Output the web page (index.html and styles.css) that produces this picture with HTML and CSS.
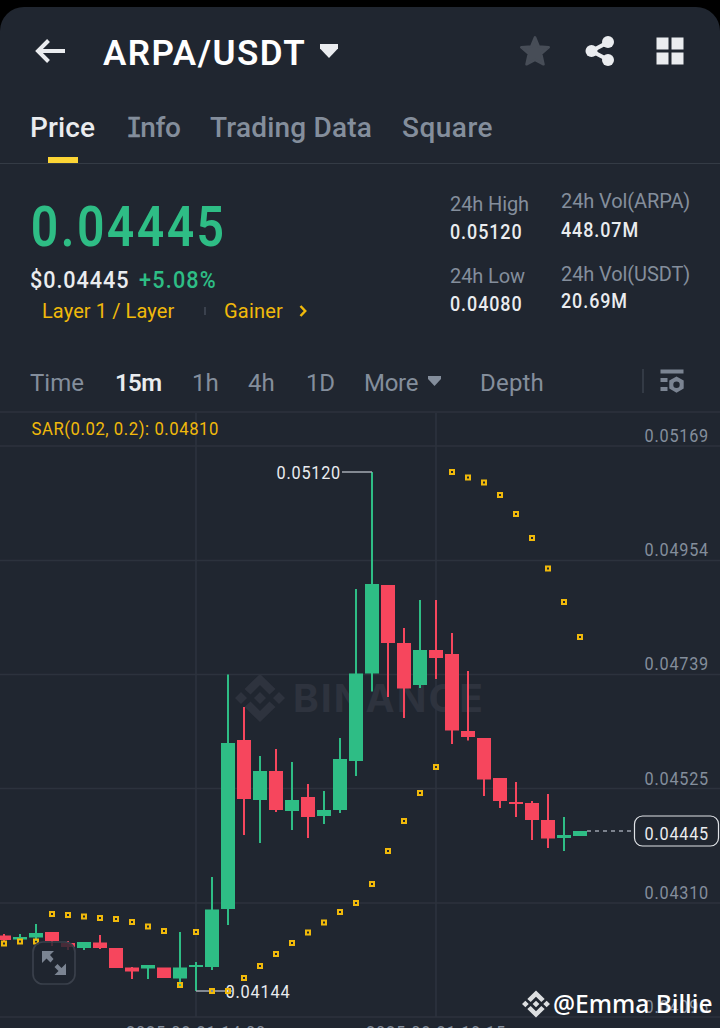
FILE: index.html
```html
<!DOCTYPE html>
<html lang="en">
<head>
<meta charset="utf-8">
<title>ARPA/USDT</title>
<link rel="stylesheet" href="styles.css">
</head>
<body>
<main class="app">
  <header class="topbar">
    <svg class="back" width="32" height="26" viewBox="34 38 32 26"><path d="M65 51H38M48.500 40.500 38 51l10.500 10.500" fill="none" stroke="#eaecef" stroke-width="4"/></svg>
    <h1 class="pair">ARPA/USDT</h1>
    <svg class="caret" width="18" height="14" viewBox="0 0 18 14"><path d="M0 0h18v4.500L9 14 0 4.500z" fill="#eaecef"/></svg>
    <div class="actions">
      <svg width="30" height="30" viewBox="0 0 30 30"><path d="M15 1.300l3.800 9.200 9.900.8-7.500 6.500 2.300 10.500L15 23.800l-8.500 4.500 2.300-10.500-7.500-6.500 9.900-.8z" fill="#474d57" stroke="#474d57" stroke-width="2.500" stroke-linejoin="round"/></svg>
      <svg width="30" height="30" viewBox="0 0 30 30"><path d="M23.500 6 6.500 15l17 9" fill="none" stroke="#eaecef" stroke-width="4"/><g fill="#eaecef"><circle cx="23" cy="6" r="6"/><circle cx="6.500" cy="15" r="6"/><circle cx="23" cy="24" r="6"/></g></svg>
      <svg width="28" height="28" viewBox="0 0 28 28"><path d="M.5.500h12v12H.5zM15.500.500h12v12h-12zM.5 15.500h12v12H.5zM15.500 15.500h12v12h-12z" fill="#eaecef"/></svg>
    </div>
  </header>
  <nav class="tabs">
    <a class="tab tab-price active">Price</a>
    <a class="tab tab-info"><span class="slab">I</span>nfo</a>
    <a class="tab tab-data">Trading Data</a>
    <a class="tab tab-square">Square</a>
  </nav>
  <section class="summary">
    <div class="quote">
      <div class="last">0.04445</div>
      <div class="fiat"><span class="usd">$0.04445</span><span class="change">+5.08%</span></div>
      <div class="tags"><span class="tag-layer">Layer 1 / Layer</span><i class="tick"></i><span class="tag-gainer">Gainer</span><svg width="8" height="12" viewBox="0 0 8 12"><path d="M1.500 1 6.200 6l-4.700 5" fill="none" stroke="#f0b90b" stroke-width="2.500"/></svg></div>
    </div>
    <dl class="stats stats-range"><dt>24h High</dt><dd>0.05120</dd><dt>24h Low</dt><dd>0.04080</dd></dl>
    <dl class="stats stats-volume"><dt>24h Vol(ARPA)</dt><dd>448.07M</dd><dt>24h Vol(USDT)</dt><dd>20.69M</dd></dl>
  </section>
  <nav class="frames">
    <span class="f-time">Time</span><span class="f-15 selected">15m</span><span class="f-1h">1h</span><span class="f-4h">4h</span><span class="f-1d">1D</span><span class="f-more">More</span>
    <svg class="f-caret" width="13" height="10" viewBox="0 0 13 10"><path d="M0 0h13v3L6.500 10 0 3z" fill="#848e9c"/></svg>
    <span class="f-depth">Depth</span><i class="split"></i>
    <svg class="f-settings" width="24" height="24" viewBox="0 0 24 24"><path d="M.5.500h23v4H.5zM.5 9h7v4h-7zM.5 18h7v4h-7z" fill="#7b8492"/><path fill-rule="evenodd" d="M16.500 7.500l7.200 4v8l-7.200 4.200-7.200-4.200v-8zM16.500 12.500a3.200 3.200 0 1 0 0 6.400 3.200 3.200 0 0 0 0-6.400z" fill="#7b8492"/></svg>
  </nav>
  <svg class="chart" width="720" height="617" viewBox="0 411 720 617">
    <defs>
      <marker id="sar" markerUnits="userSpaceOnUse" markerWidth="8" markerHeight="8" refX="4" refY="4"><path d="M2 2h4v4H2z" fill="none" stroke="#f0b90b" stroke-width="2"/></marker>
      <g id="bnb"><path d="M0-24 15.500-9 9.500-3.500 0-13-9.500-3.500-15.500-9zM0 24l15.500-15-6-5.500L0 13-9.500 3.500-15.500 9zM0-6 6 0 0 6-6 0zM19-6l6 6-6 6-6-6zM-19-6l6 6-6 6-6-6z"/></g>
    </defs>
    <path class="grid" d="M0 412H720M0 446H720M0 560.500H720M0 674.500H720M0 788.500H720M0 903H720M0 1017H720M196 413V1017M436 413V1017"/>
    <g fill="#2e333e"><use href="#bnb" x="260" y="698"/><text class="brand" x="293" y="712" textLength="192" lengthAdjust="spacingAndGlyphs">BINANCE</text></g>
    <g class="axis">
      <text x="644.500" y="442" textLength="64.500" lengthAdjust="spacingAndGlyphs">0.05169</text>
      <text x="644.500" y="556" textLength="64.500" lengthAdjust="spacingAndGlyphs">0.04954</text>
      <text x="644.500" y="670" textLength="64.500" lengthAdjust="spacingAndGlyphs">0.04739</text>
      <text x="644.500" y="785" textLength="64.500" lengthAdjust="spacingAndGlyphs">0.04525</text>
      <text x="644.500" y="899" textLength="64.500" lengthAdjust="spacingAndGlyphs">0.04310</text>
      <text x="644.500" y="1013" textLength="64.500" lengthAdjust="spacingAndGlyphs">0.04095</text>
      <text x="126" y="1039" textLength="140" lengthAdjust="spacingAndGlyphs">2025-08-31 14:00</text>
      <text x="366" y="1039" textLength="140" lengthAdjust="spacingAndGlyphs">2025-08-31 19:15</text>
    </g>
    <text class="sar-label" x="31.500" y="435" textLength="187.500" lengthAdjust="spacingAndGlyphs">SAR(0.02, 0.2): 0.04810</text>
    <path class="wick up" d="M20 934V939M36 924V941M84 942V950M148 965V979M180 932V988M196 962V991M212 877V970M228 674.500V925M260 756V843M292 762V830M324 791V824M340 738V813M356 589V776M372 472V691.500M420 600V688M564 817V851"/>
    <path class="wick down" d="M4 934V942M52 932V946M68 941V950M100 935V949M132 967V979M244 707V835M276 749V812M308 784V838M388 585V697M404 628V718M436 600V679M452 633V744M468 671V740.500M484 738V796M500 778V808M516 782V817M532 801V840M548 794V848"/>
    <path class="body up" d="M20 937V939.500M36 933V937.500M84 942V948M148 965V968.500M180 967.500V978.500M196 965V967M212 909.500V967M228 743V909M260 771V800M292 800V811M324 810V816M340 759V810M356 673.500V761M372 584V673.500M420 650V685M564 835V838M580 831V836"/>
    <path class="body down" d="M4 935.500V940M52 932V941M68 943V947M100 942.500V948M116 948V968M132 967.500V971.500M164 967.500V978M244 740V799M276 771V810M308 797V817M388 585V643M404 643V688.500M436 650V658M452 654V730.500M468 731V737M484 738V779.500M500 778V801M516 802V804M532 803V820M548 820V838.500"/>
    <path d="M342 472H372M196 991H232" stroke="#a4aab3" stroke-width="1.500"/>
    <g class="extreme"><text x="276.500" y="479" textLength="64.500" lengthAdjust="spacingAndGlyphs">0.05120</text><text x="225.500" y="998" textLength="65" lengthAdjust="spacingAndGlyphs">0.04144</text></g>
    <polyline class="sar" points="4,943.5 20,941.5 36,941.5 52,914 68,915 84,916.5 100,918 116,919 132,922 148,926.5 164,931 180,985 196,932 212,991 228,991 244,978 260,966 276,954 292,943 308,932.5 324,922.5 340,912 356,903 372,884 388,851 404,821 420,793 436,767 452,472 468,477.5 484,482.5 500,495 516,514 532,538 548,568.5 564,602 580,637"/>
    <path d="M587 831H632" stroke="#9aa1ac" stroke-width="1.500" stroke-dasharray="4"/>
    <rect x="634.500" y="816" width="84" height="30" rx="8" fill="#202630" stroke="#dfe2e6" stroke-width="1.200"/>
    <text class="current" x="644.500" y="840" textLength="64.500" lengthAdjust="spacingAndGlyphs">0.04445</text>
    <rect x="33" y="942" width="42" height="42" rx="10" fill="#202630" fill-opacity=".82" stroke="#3a404b" stroke-width="1.700"/>
    <path d="M42 951h12l-4 4 3.500 4-3 3.500-4-4-4.500 4.500zM66 975H54.500l4-4-4-4 3-3 4 4 4.500-4.500z" fill="#7b8492"/>
    <use href="#bnb" transform="translate(536 1004) scale(.56)" fill="#dcdee0"/>
    <text class="author" x="553" y="1012.500" textLength="159.500" lengthAdjust="spacingAndGlyphs">@Emma Billie</text>
  </svg>
</main>
</body>
</html>
```
FILE: styles.css
```css
* { box-sizing: border-box; }
body { margin: 0; background: #000; padding-top: 7px; height: 1028px; overflow: hidden; font-family: Roboto, "Noto Sans", sans-serif; }
.app { height: 1021px; background: #202630; border-radius: 24px 24px 0 0; overflow: hidden; display: flex; flex-direction: column; color: #eaecef; white-space: nowrap; }
svg { display: block; flex: none; }
.topbar { height: 88px; display: flex; align-items: center; padding: 0 36px 0 34px; }
.pair { margin: 6px 0 0 37px; width: 217px; font-size: 35px; line-height: 40px; font-weight: 600; letter-spacing: 1.5px; color: #fff; }
.caret { margin-top: 0; }
.actions { margin-left: auto; display: flex; align-items: center; gap: 35px; }
.actions svg:last-child { margin-left: 6px; }
.tabs { height: 69px; display: flex; border-bottom: 1px solid #343b45; padding-left: 30px; font-size: 28px; line-height: 66px; font-weight: 500; color: #848e9c; }
.tab { position: relative; height: 68px; flex: none; }
.tab-price { width: 96px; letter-spacing: .1px; }
.tab-info { width: 84px; letter-spacing: -.4px; }
.tab-data { width: 192px; letter-spacing: .2px; }
.tab-square { letter-spacing: .5px; }
.slab { font-family: "DejaVu Sans Mono", monospace; font-size: 27px; letter-spacing: -2px; -webkit-text-stroke: .6px currentColor; }
.active { color: #eaecef; }
.active::after { content: ""; position: absolute; left: 18px; bottom: 0; width: 30px; height: 6px; background: #fcd535; }
.summary { height: 190px; display: flex; padding-left: 30px; }
.quote { width: 420px; padding-top: 31px; }
.last { font-size: 56px; line-height: 64px; font-weight: 600; letter-spacing: 2.8px; color: #2ebd85; transform: scaleX(.86); transform-origin: 0 50%; padding-left: 1px; }
.fiat { display: flex; font-size: 23.5px; line-height: 32px; margin-top: 5px; font-weight: 500; }
.usd { width: 109px; }
.usd, .change { letter-spacing: 1px; transform: scaleX(.92); transform-origin: 0 50%; }
.change { color: #2ebd85; letter-spacing: 1.3px; }
.tags { display: flex; align-items: center; line-height: 30px; padding-left: 12px; font-size: 20px; color: #f0b90b; }
.tag-layer { width: 162px; letter-spacing: .1px; }
.tick { width: 2px; height: 8px; background: #3a414d; margin-right: 18px; }
.tag-gainer { width: 75px; letter-spacing: .2px; }
.stats { margin: 0; font-size: 20px; }
.stats-range { width: 111px; padding-top: 26px; }
.stats-volume { padding-top: 23px; }
.stats dt { line-height: 28px; color: #848e9c; letter-spacing: -.1px; }
.stats dd { margin: 1px 0 15px; line-height: 28px; font-size: 19.5px; font-weight: 500; letter-spacing: 1px; transform: scaleX(.92); transform-origin: 0 50%; }
.stats-volume dt + dd { margin-top: 2px; margin-bottom: 15px; }
.stats-volume dd:last-child { margin-top: 0; }
.frames { height: 57px; display: flex; align-items: center; padding-left: 30px; font-size: 24px; color: #848e9c; }
.frames span { flex: none; }
.f-time { width: 85px; }
.f-15 { width: 77px; letter-spacing: -.6px; }
.selected { color: #eaecef; font-weight: 600; }
.f-1h { width: 56px; }
.f-4h { width: 58px; }
.f-1d { width: 58px; letter-spacing: -.3px; }
.f-more { width: 64px; letter-spacing: -.3px; }
.f-caret { margin: -3px 39px 0 0; }
.f-depth { width: 162px; letter-spacing: .2px; }
.split { width: 2px; height: 24px; background: #333a45; margin: -3px 16px 0 0; }
.f-settings { margin-top: -3px; }
.chart { font-family: Roboto, "Noto Sans", sans-serif; font-size: 18.5px; letter-spacing: .9px; }
.grid { stroke: #2c323d; stroke-width: 1.7; fill: none; }
.brand { font-family: Inter, sans-serif; font-weight: 700; font-size: 38px; letter-spacing: 2px; }
.axis { fill: #848e9c; }
.sar-label { fill: #f0b90b; font-size: 18px; letter-spacing: .6px; }
.extreme, .current { fill: #eaecef; }
.wick { stroke-width: 2; fill: none; }
.body { stroke-width: 14; fill: none; }
.up { stroke: #2ebd85; }
.down { stroke: #f6465d; }
.sar { fill: none; stroke: none; marker: url(#sar); }
.author { font-family: "Noto Sans", sans-serif; font-size: 25px; font-weight: 500; letter-spacing: 0; fill: #fff; }
```
